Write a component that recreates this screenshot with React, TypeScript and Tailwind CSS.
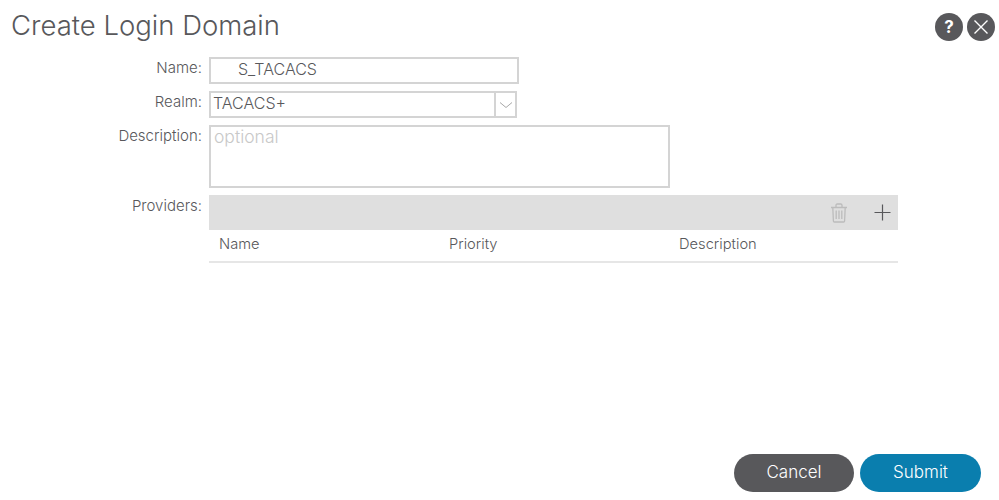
import React from "react";

const font = { fontFamily: '"Inter", "Liberation Sans", sans-serif' };

function Row({ label, children, className }: { label: string; children: React.ReactNode; className?: string }) {
  return (
    <div className={"flex " + (className ?? "")}>
      <div className="w-[202px] shrink-0 pt-[1px] text-right text-[15px] leading-[20px] font-light text-[#58585b]">{label}</div>
      <div className="ml-[7px] min-w-0">{children}</div>
    </div>
  );
}

export default function App() {
  return (
    <div className="flex h-[500px] w-[999px] flex-col overflow-hidden bg-white text-[#58585b]" style={font}>
      <header className="flex h-[57px] items-start justify-between pl-[11px] pr-[4px]">
        <h1 className="mt-[7px] text-[27.5px] font-light leading-[36px] text-[#58585b]">Create Login Domain</h1>
        <div className="mt-[13px] flex gap-[4px]">
          <div className="flex h-[28px] w-[28px] items-center justify-center rounded-full bg-[#58585b] text-[17px] font-bold leading-none text-white">?</div>
          <div className="flex h-[28px] w-[28px] items-center justify-center rounded-full bg-[#58585b]">
            <svg width="18" height="18" viewBox="0 0 18 18" fill="none" stroke="white" strokeWidth="1.4">
              <path d="M2.5 2.5 15.5 15.5M15.5 2.5 2.5 15.5" />
            </svg>
          </div>
        </div>
      </header>

      <Row label="Name:">
        <div className="flex h-[27px] w-[310px] items-center border-2 border-[#d4d4d4] pb-[3px] pl-[27px] text-[16px] font-light text-[#58585b]">S_TACACS</div>
      </Row>
      <Row label="Realm:" className="mt-[7px]">
        <div className="flex h-[27px] w-[308px] items-center border-2 border-[#d4d4d4] text-[16px] font-light text-[#58585b]">
          <div className="flex-1 pb-[3px] pl-[2px]">TACACS+</div>
          <div className="flex h-full w-[21px] items-center justify-center border-l-2 border-[#d4d4d4]">
            <svg width="14" height="8" viewBox="0 0 14 8" fill="none" stroke="#a8a8a8" strokeWidth="1">
              <path d="M1 1.5 7 6.5 13 1.5" />
            </svg>
          </div>
        </div>
      </Row>
      <Row label="Description:" className="mt-[7px]">
        <div className="h-[63px] w-[461px] border-2 border-[#d4d4d4] pl-[3px] text-[17.5px] font-light leading-[20px] text-[#c8c8c8]">optional</div>
      </Row>
      <Row label="Providers:" className="mt-[7px]">
        <div className="w-[689px]">
          <div className="flex h-[35px] items-center justify-end bg-[#dfdfdf] pr-[7px]">
            <svg width="18" height="20" viewBox="0 0 18 20" fill="none" stroke="#bcbcbc" strokeWidth="1.3" className="mr-[26px]">
              <path d="M1 4.5h16M6 4.5V2.2C6 1.5 6.5 1 7.2 1h3.6c.7 0 1.2.5 1.2 1.2v2.3" />
              <path d="M2.8 4.5 3.4 18c0 .6.4 1 1 1h9.2c.6 0 1-.4 1-1l.6-13.5" />
              <path d="M6.2 7.5v8.5M9 7.5v8.5M11.8 7.5v8.5" />
            </svg>
            <svg width="17" height="17" viewBox="0 0 17 17" fill="none" stroke="#58585b" strokeWidth="1.2">
              <path d="M8.5 0.5v16M0.5 8.5h16" />
            </svg>
          </div>
          <div className="flex h-[33px] items-center border-b-2 border-[#e6e6e6] pb-[2px] text-[14.7px] font-light text-[#58585b]">
            <div className="w-[240px] pl-[10px]">Name</div>
            <div className="w-[230px]">Priority</div>
            <div>Description</div>
          </div>
        </div>
      </Row>

      <footer className="mt-auto mb-[8px] flex justify-end gap-[6px] pr-[18px]">
        <button className="h-[38px] w-[120px] rounded-full bg-[#58585b] text-[17px] font-light text-white">Cancel</button>
        <button className="h-[38px] w-[121px] rounded-full bg-[#0a7eae] text-[17px] font-light text-white">Submit</button>
      </footer>
    </div>
  );
}
